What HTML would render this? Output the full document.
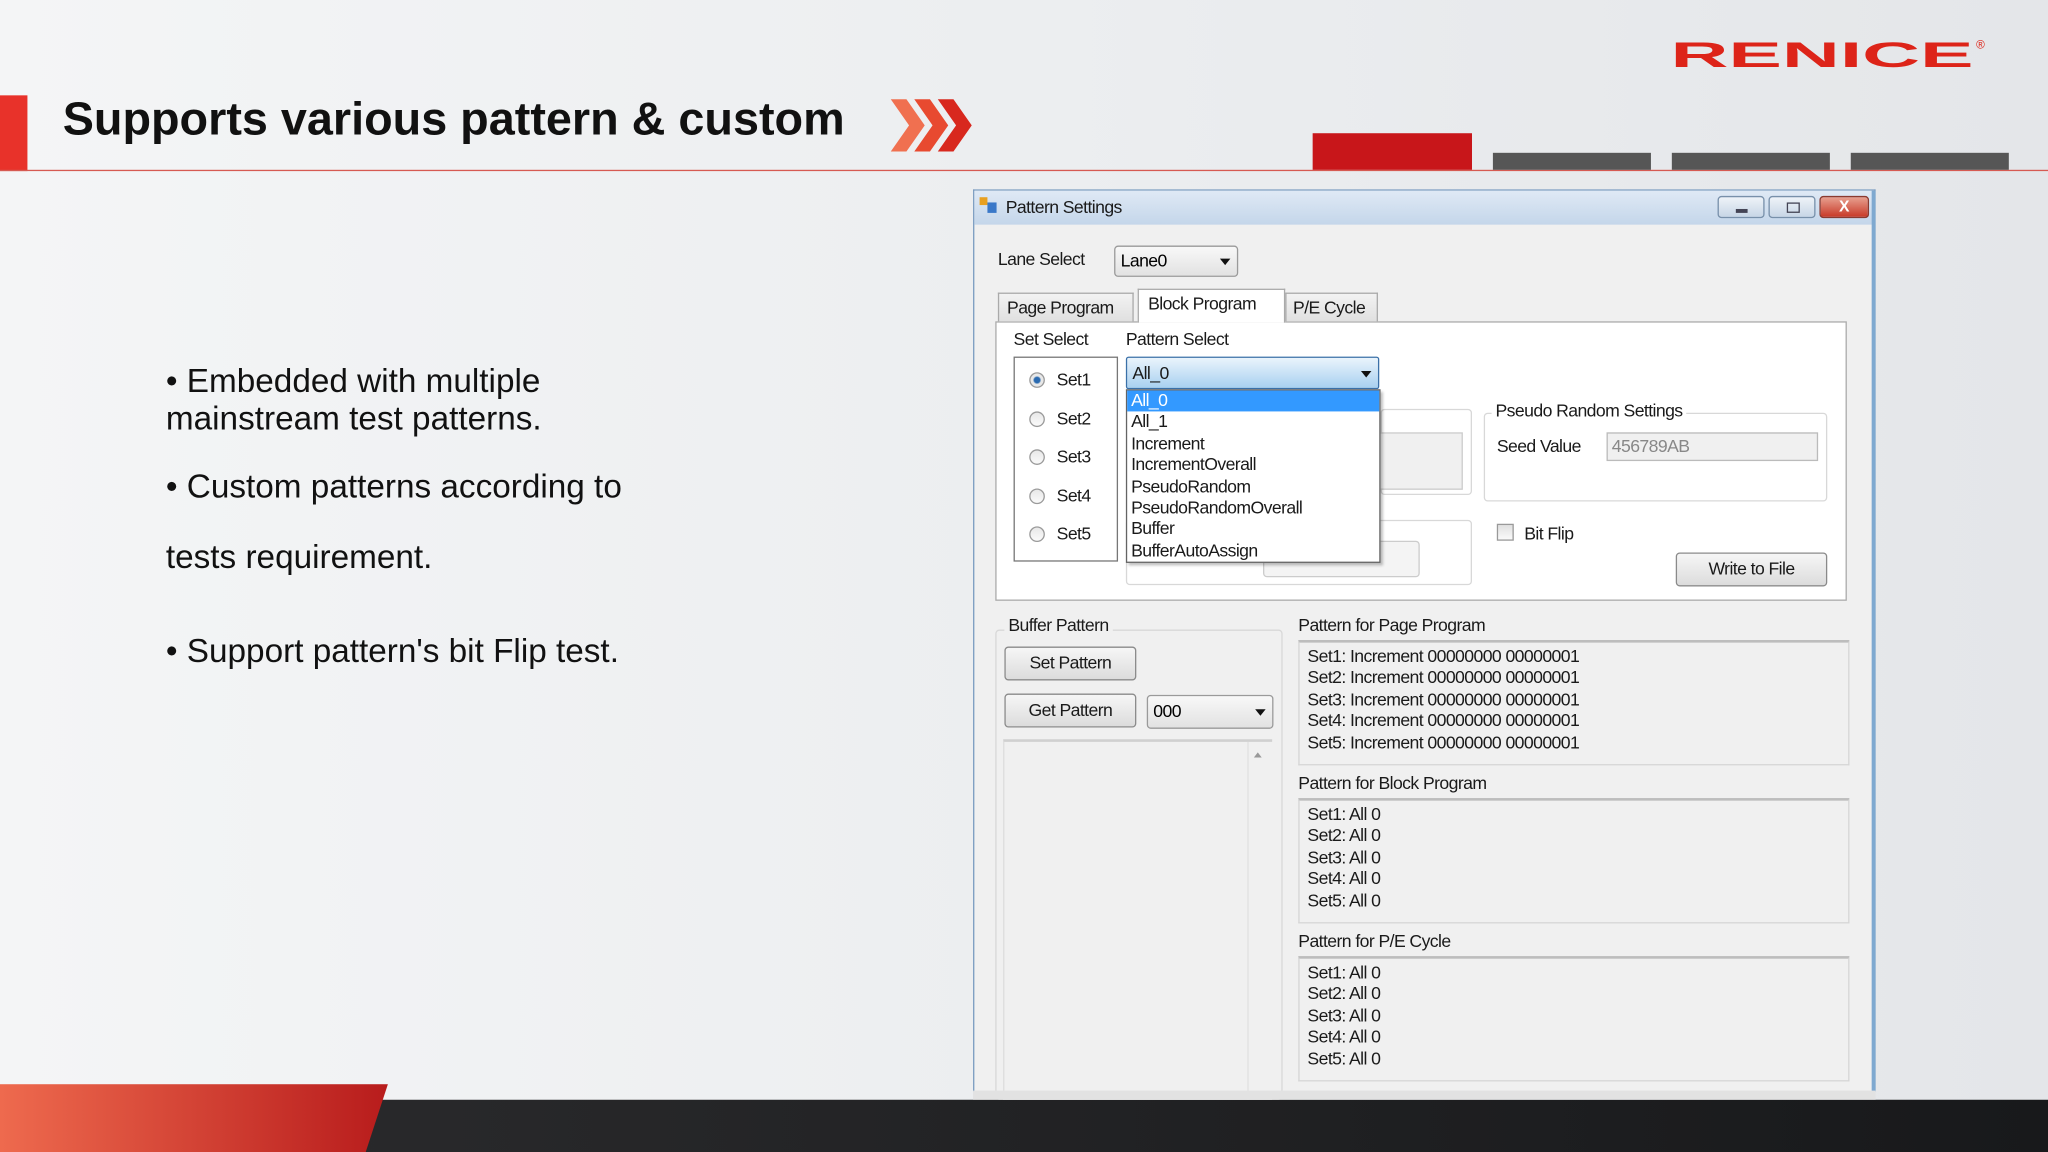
<!DOCTYPE html>
<html><head><meta charset="utf-8">
<style>
html,body{margin:0;padding:0;width:2048px;height:1152px;overflow:hidden;}
#w{position:absolute;left:0;top:0;width:1568px;height:882px;transform:scale(1.306122);transform-origin:0 0;
background:linear-gradient(90deg,#f4f5f6 0%,#eceef0 50%,#e4e6e9 100%);font-family:"Liberation Sans",sans-serif;overflow:hidden;}
.a{position:absolute;}
.d{font-size:13.5px;color:#1a1a1a;letter-spacing:-0.45px;white-space:nowrap;}
.btn{position:absolute;border:1px solid #8a8a8a;border-radius:3px;background:linear-gradient(#f6f6f6,#dcdcdc);font-size:13.5px;letter-spacing:-0.45px;text-align:center;color:#1a1a1a;box-sizing:border-box;}
.cb{position:absolute;border:1px solid #9a9a9a;border-radius:3px;background:linear-gradient(#f8f8f8,#e2e2e2);box-sizing:border-box;font-size:13.5px;letter-spacing:-0.45px;padding-left:4px;}
.cb:after{content:"";position:absolute;right:5px;top:50%;margin-top:-2px;border-left:4px solid transparent;border-right:4px solid transparent;border-top:5px solid #111;}
.grp{position:absolute;border:1px solid #d8d8d8;border-radius:3px;box-sizing:border-box;}
.rad{position:absolute;width:12px;height:12px;border-radius:50%;border:1px solid #9a9a9a;background:linear-gradient(#e8e8e8,#fafafa);box-sizing:border-box;}
.box{position:absolute;background:#f0f0f0;border:1px solid #d6d6d6;border-top:2px solid #bdbdbd;box-sizing:border-box;}
.ln{font-size:13.5px;letter-spacing:-0.45px;line-height:16.4px;color:#1a1a1a;}
.b{font-size:25.5px;color:#111;white-space:nowrap;}
</style></head><body>
<div id="w">
<div class="a" style="left:0;top:73px;width:21px;height:58px;background:#e8322a"></div>
<div class="a" style="left:0;top:130px;width:1568px;height:1px;background:#d65a52"></div>
<div class="a" style="left:48px;top:71px;font-size:35.8px;font-weight:bold;color:#111;white-space:nowrap">Supports various pattern &amp; custom</div>
<svg class="a" style="left:680px;top:74px" width="68" height="44" viewBox="0 0 68 44">
<polygon points="2,2 14,2 28,22 14,42 2,42 16,22" fill="#f07050"/>
<polygon points="20,2 32,2 46,22 32,42 20,42 34,22" fill="#e84a30"/>
<polygon points="38,2 50,2 64,22 50,42 38,42 52,22" fill="#d8281e"/>
</svg>
<div class="a" style="left:1005px;top:102px;width:122px;height:28px;background:#c8161a"></div>
<div class="a" style="left:1143px;top:117px;width:121px;height:13px;background:#565656"></div>
<div class="a" style="left:1280px;top:117px;width:121px;height:13px;background:#565656"></div>
<div class="a" style="left:1417px;top:117px;width:121px;height:13px;background:#565656"></div>
<svg class="a" style="left:1278px;top:30px" width="250" height="30"><text x="1" y="25" font-family="Liberation Sans" font-weight="bold" font-size="32" fill="#dd2419" textLength="232" lengthAdjust="spacingAndGlyphs" transform="scale(1,0.85)" style="font-size:32px">RENICE</text></svg>
<div class="a" style="left:1513px;top:29px;font-size:9px;color:#dd2419">®</div>
<div class="a b" style="left:127px;top:278px;line-height:29px">• Embedded with multiple<br>mainstream test patterns.</div>
<div class="a b" style="left:127px;top:359px">• Custom patterns according to</div>
<div class="a b" style="left:127px;top:413px">tests requirement.</div>
<div class="a b" style="left:127px;top:485px">• Support pattern's bit Flip test.</div>
<div class="a" style="left:0;top:842px;width:1568px;height:40px;background:linear-gradient(90deg,#2c2c2e,#18191b)"></div>
<svg class="a" style="left:0;top:830px" width="300" height="52"><defs><linearGradient id="g" x1="0" x2="1"><stop offset="0" stop-color="#ee6a4e"/><stop offset="1" stop-color="#b81c1c"/></linearGradient></defs><polygon points="0,0 297,0 280,52 0,52" fill="url(#g)"/></svg>
<div class="a" style="left:745px;top:145px;width:691px;height:691px;background:#f0f0f0;border:1px solid #7a9cc0;box-sizing:border-box;border-bottom:none"></div>
<div class="a" style="left:746px;top:146px;width:689px;height:26px;background:linear-gradient(#dfe9f5,#c4d6ea)"></div>
<div class="a" style="left:1433px;top:146px;width:3px;height:690px;background:#7fa9d0"></div>
<div class="a" style="left:750px;top:151px;width:6px;height:6px;background:#e8a020"></div>
<div class="a" style="left:756px;top:155px;width:7px;height:8px;background:#3a78c8"></div>
<div class="a d" style="left:770px;top:151px">Pattern Settings</div>
<div class="a" style="left:1315px;top:150px;width:36px;height:17px;border:1px solid #7890aa;border-radius:3px;background:linear-gradient(#eef3f8,#c8d6e6);box-sizing:border-box"><div class="a" style="left:13px;top:9px;width:9px;height:3px;background:#445"></div></div>
<div class="a" style="left:1354px;top:150px;width:36px;height:17px;border:1px solid #7890aa;border-radius:3px;background:linear-gradient(#eef3f8,#c8d6e6);box-sizing:border-box"><div class="a" style="left:13px;top:4px;width:8px;height:6px;border:1px solid #445"></div></div>
<div class="a" style="left:1393px;top:150px;width:38px;height:17px;border:1px solid #8a3a30;border-radius:3px;background:linear-gradient(#e8a090,#c83a28);box-sizing:border-box;color:#fff;font-weight:bold;font-size:12px;text-align:center;line-height:15px">X</div>
<div class="a d" style="left:764px;top:191px">Lane Select</div>
<div class="cb" style="left:853px;top:188px;width:95px;height:24px;line-height:22px">Lane0</div>
<div class="a" style="left:762px;top:246px;width:652px;height:214px;background:#fff;border:1px solid #aaa;box-sizing:border-box"></div>
<div class="a d" style="left:764px;top:224px;width:104px;height:22px;border:1px solid #aaa;border-bottom:none;background:linear-gradient(#f2f2f2,#e0e0e0);box-sizing:border-box;padding:3px 0 0 6px">Page Program</div>
<div class="a d" style="left:871px;top:221px;width:113px;height:26px;border:1px solid #aaa;border-bottom:none;background:#fff;box-sizing:border-box;padding:3px 0 0 7px">Block Program</div>
<div class="a d" style="left:984px;top:224px;width:71px;height:22px;border:1px solid #aaa;border-bottom:none;background:linear-gradient(#f2f2f2,#e0e0e0);box-sizing:border-box;padding:3px 0 0 5px">P/E Cycle</div>
<div class="a d" style="left:776px;top:252px">Set Select</div>
<div class="a d" style="left:862px;top:252px">Pattern Select</div>
<div class="a" style="left:776px;top:273px;width:80px;height:157px;border:1px solid #777;box-sizing:border-box"></div>
<div class="rad" style="left:788px;top:285px;background:radial-gradient(#2a6ab0 30%,#e8e8e8 45%)"></div><div class="a d" style="left:809px;top:283px">Set1</div>
<div class="rad" style="left:788px;top:315px"></div><div class="a d" style="left:809px;top:313px">Set2</div>
<div class="rad" style="left:788px;top:344px"></div><div class="a d" style="left:809px;top:342px">Set3</div>
<div class="rad" style="left:788px;top:374px"></div><div class="a d" style="left:809px;top:372px">Set4</div>
<div class="rad" style="left:788px;top:403px"></div><div class="a d" style="left:809px;top:401px">Set5</div>
<div class="grp" style="left:1057px;top:313px;width:70px;height:66px"></div>
<div class="a" style="left:1055px;top:331px;width:65px;height:44px;background:#f0f0f0;border:1px solid #ccc;box-sizing:border-box"></div>
<div class="grp" style="left:862px;top:398px;width:265px;height:50px"></div>
<div class="a" style="left:967px;top:414px;width:118px;height:26px;border:1px solid #ccc;background:#f4f4f4;border-radius:3px"></div>
<div class="grp" style="left:1136px;top:316px;width:263px;height:68px"></div>
<div class="a d" style="left:1142px;top:307px;background:#fff;padding:0 3px">Pseudo Random Settings</div>
<div class="a d" style="left:1146px;top:334px">Seed Value</div>
<div class="a d" style="left:1230px;top:331px;width:162px;height:22px;border:1px solid #bbb;background:#f0f0f0;box-sizing:border-box;color:#888;padding:2px 0 0 3px">456789AB</div>
<div class="a" style="left:1146px;top:401px;width:13px;height:13px;border:1px solid #999;background:linear-gradient(#e0e0e0,#fafafa);box-sizing:border-box"></div>
<div class="a d" style="left:1167px;top:401px">Bit Flip</div>
<div class="btn" style="left:1283px;top:423px;width:116px;height:26px;line-height:24px">Write to File</div>
<div class="a" style="left:862px;top:273px;width:194px;height:25px;border:1px solid #3a70a8;border-radius:2px;background:linear-gradient(#eaf4fc,#a8d0f0);box-sizing:border-box"></div>
<div class="a d" style="left:867px;top:278px">All_0</div>
<div class="a" style="left:1042px;top:284px;border-left:4px solid transparent;border-right:4px solid transparent;border-top:5px solid #111"></div>
<div class="a" style="left:862px;top:298px;width:195px;height:133px;background:#fff;border:1px solid #646464;box-sizing:border-box;box-shadow:2px 2px 2px rgba(0,0,0,.25)"></div>
<div class="a" style="left:863px;top:299px;width:193px;height:16px;background:#3399ff"></div>
<div class="a ln" style="left:866px;top:299px"><span style="color:#fff">All_0</span><br>All_1<br>Increment<br>IncrementOverall<br>PseudoRandom<br>PseudoRandomOverall<br>Buffer<br>BufferAutoAssign</div>
<div class="grp" style="left:762px;top:482px;width:220px;height:360px"></div>
<div class="a d" style="left:769px;top:471px;background:#f0f0f0;padding:0 3px">Buffer Pattern</div>
<div class="btn" style="left:769px;top:495px;width:101px;height:26px;line-height:24px">Set Pattern</div>
<div class="btn" style="left:769px;top:531px;width:101px;height:26px;line-height:24px">Get Pattern</div>
<div class="cb" style="left:878px;top:532px;width:97px;height:26px;line-height:24px">000</div>
<div class="a" style="left:768px;top:566px;width:206px;height:276px;background:#f0f0f0;border-top:2px solid #d0d0d0;border-left:1px solid #ddd;box-sizing:border-box"></div>
<div class="a" style="left:955px;top:568px;width:1px;height:274px;background:#e0e0e0"></div>
<div class="a" style="left:960px;top:576px;border-left:3px solid transparent;border-right:3px solid transparent;border-bottom:4px solid #999"></div>
<div class="a d" style="left:994px;top:471px">Pattern for Page Program</div>
<div class="box" style="left:994px;top:490px;width:422px;height:96px"></div>
<div class="a ln" style="left:1001px;top:495px">Set1: Increment 00000000 00000001<br>Set2: Increment 00000000 00000001<br>Set3: Increment 00000000 00000001<br>Set4: Increment 00000000 00000001<br>Set5: Increment 00000000 00000001</div>
<div class="a d" style="left:994px;top:592px">Pattern for Block Program</div>
<div class="box" style="left:994px;top:611px;width:422px;height:96px"></div>
<div class="a ln" style="left:1001px;top:616px">Set1: All 0<br>Set2: All 0<br>Set3: All 0<br>Set4: All 0<br>Set5: All 0</div>
<div class="a d" style="left:994px;top:713px">Pattern for P/E Cycle</div>
<div class="box" style="left:994px;top:732px;width:422px;height:96px"></div>
<div class="a ln" style="left:1001px;top:737px">Set1: All 0<br>Set2: All 0<br>Set3: All 0<br>Set4: All 0<br>Set5: All 0</div>
<div class="a" style="left:745px;top:835px;width:691px;height:7px;background:#e2e2e2"></div>
</div>
</body></html>
